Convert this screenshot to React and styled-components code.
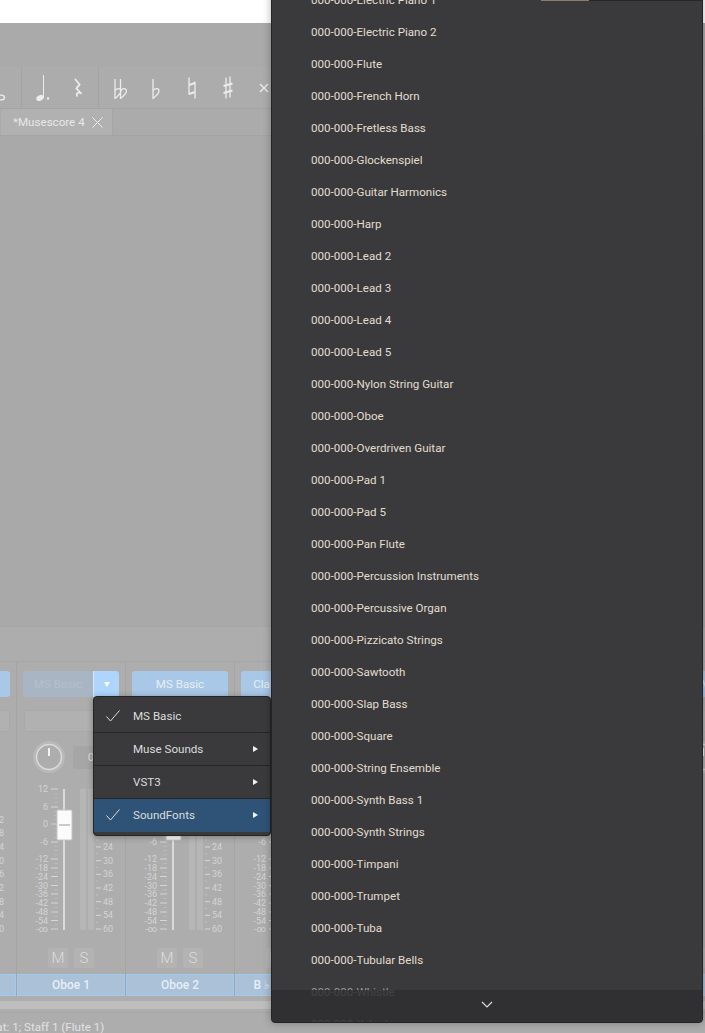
import React from "react";
import styled, { createGlobalStyle } from "styled-components";

const FONT = `Roboto, "Open Sans", sans-serif`;

const GlobalStyle = createGlobalStyle`
  html, body {
    margin: 0;
    background: #ababab;
    overflow: hidden;
  }
`;

const Page = styled.div`
  position: relative;
  width: 705px;
  height: 1033px;
  overflow: hidden;
  display: flex;
  flex-direction: column;
  background: #ababab;
  font-family: ${FONT};
  font-size: 11.6px;
`;

const TopWhite = styled.div`
  height: 23px;
  flex: none;
  background: #fff;
`;

const HeaderBand = styled.div`
  height: 44px;
  flex: none;
  background: #aaaaaa;
`;

const NoteBar = styled.div`
  height: 41px;
  flex: none;
  display: flex;
  background: #acacac;
  border-bottom: 1px solid #a4a4a4;
`;

const NoteCell = styled.div`
  display: flex;
  align-items: center;
  gap: ${p => p.$gap}px;
  padding-left: ${p => p.$pad}px;
  width: ${p => p.$w}px;
  box-sizing: border-box;
  border-right: 1px solid #a4a4a4;
  overflow: hidden;
  flex: none;
  svg {
    flex: none;
    display: block;
  }
`;

const TabBar = styled.div`
  height: 26px;
  flex: none;
  display: flex;
  padding-left: 1px;
  background: #ababab;
  border-bottom: 1px solid #a4a4a4;
`;

const Tab = styled.div`
  width: 112px;
  box-sizing: border-box;
  display: flex;
  align-items: center;
  justify-content: space-between;
  padding: 0 9px 0 12px;
  background: #b1b1b1;
  border-right: 1px solid #a6a6a6;
  color: #e8e8e8;
`;

const ScoreArea = styled.div`
  height: 490px;
  flex: none;
  background: #a9a9a9;
  border-bottom: 1px solid #a5a5a5;
`;

const GapBand = styled.div`
  height: 34px;
  flex: none;
  background: #adadad;
  border-bottom: 1px solid #a6a6a6;
`;

const Mixer = styled.div`
  display: flex;
  flex: none;
  margin-left: -92px;
  background: #adadad;
`;

const Strip = styled.div`
  width: 109px;
  flex: none;
  box-sizing: border-box;
  display: flex;
  flex-direction: column;
  padding-top: 9px;
  border-right: 1px solid #a4a4a4;
`;

const SoundRow = styled.div`
  display: flex;
  width: 96px;
  height: 26px;
  margin-left: 6px;
  color: #e6eef6;
`;

const SoundMain = styled.div`
  flex: 1;
  min-width: 0;
  display: flex;
  align-items: center;
  justify-content: center;
  padding-bottom: 1px;
  box-sizing: border-box;
  white-space: nowrap;
  overflow: hidden;
  border-radius: ${p => (p.$open ? "3px 0 0 3px" : "3px")};
  background: ${p => (p.$open ? "#a8b6c4" : "#a9c7e6")};
  color: ${p => (p.$open ? "#b4bfca" : "#e6eef6")};
`;

const SoundArrow = styled.div`
  width: 26px;
  flex: none;
  display: flex;
  align-items: center;
  justify-content: center;
  background: #aed5fc;
  border-left: 1px solid #d5e8fb;
  box-sizing: border-box;
  border-radius: 0 3px 3px 0;
`;

const TriangleDown = styled.span`
  width: 0;
  height: 0;
  border-left: 3.5px solid transparent;
  border-right: 3.5px solid transparent;
  border-top: 5px solid #fff;
`;

const FieldRow = styled.div`
  width: 95px;
  height: 22px;
  margin: 13px 0 0 7px;
  box-sizing: border-box;
  background: #b1b1b1;
  border: 1px solid #a9a9a9;
  border-radius: 3px;
`;

const KnobRow = styled.div`
  display: flex;
  align-items: center;
  gap: 8px;
  height: 32px;
  margin: 9px 0 0 16px;
`;

const ValueBox = styled.div`
  width: 36px;
  height: 23px;
  display: flex;
  align-items: center;
  justify-content: center;
  background: #a6a6a6;
  border-radius: 2px;
  color: #dcdcdc;
`;

const Scale = styled.svg`
  display: block;
  margin-top: 8px;
  flex: none;
`;

const ScaleText = styled.text`
  font-family: ${FONT};
  font-size: 9px;
  fill: #d4d4d4;
`;

const MuteRow = styled.div`
  display: flex;
  gap: 6px;
  margin: 12px 0 0 31px;
`;

const MuteButton = styled.div`
  width: 20px;
  height: 20px;
  display: flex;
  align-items: center;
  justify-content: center;
  background: #b3b3b3;
  border-radius: 2px;
  color: #dcdcdc;
  font-size: 15px;
  font-weight: 300;
`;

const NameTag = styled.div`
  height: 22px;
  margin: 6px 0 0 0;
  box-sizing: border-box;
  display: flex;
  align-items: center;
  justify-content: center;
  white-space: nowrap;
  overflow: hidden;
  background: #aac1d7;
  border: 1px solid #9fcbf3;
  color: #e6eef6;
  font-size: 12px;
  font-weight: 500;
`;

const ScrollGutter = styled.div`
  height: 17px;
  flex: none;
  box-sizing: border-box;
  padding-top: 5px;
  background: #adadad;
  border-bottom: 1px solid #a6a6a6;
`;

const ScrollThumb = styled.div`
  height: 8px;
  background: #bebebe;
`;

const StatusBar = styled.div`
  flex: 1;
  display: flex;
  align-items: center;
  margin-left: -17px;
  padding-top: 7px;
  background: #adadad;
  color: #e2e2e2;
  white-space: nowrap;
`;

const SoundMenu = styled.div`
  position: absolute;
  left: 93px;
  top: 696px;
  width: 178px;
  box-sizing: border-box;
  padding: 3px 0 3px;
  background: #3a3a3c;
  border: 1px solid #242424;
  border-radius: 4px;
  box-shadow: 0 1px 6px rgba(0, 0, 0, 0.3);
`;

const MenuRow = styled.div`
  height: 33px;
  box-sizing: border-box;
  display: flex;
  align-items: center;
  position: relative;
  padding-left: 39px;
  color: #dcdcdc;
  background: ${p => (p.$active ? "#2f5377" : "transparent")};
  border-bottom: 1px solid ${p => (p.$active ? "#2f5377" : "#262626")};
`;

const CheckMark = styled.svg`
  position: absolute;
  left: 12px;
  top: 10px;
`;

const SubArrow = styled.span`
  position: absolute;
  right: 12px;
  top: 13px;
  width: 0;
  height: 0;
  border-top: 3.5px solid transparent;
  border-bottom: 3.5px solid transparent;
  border-left: 5px solid #f0f0f0;
`;

const InstrumentPopup = styled.div`
  position: absolute;
  left: 271px;
  top: -20px;
  width: 432px;
  height: 1043px;
  box-sizing: border-box;
  padding-top: 3px;
  overflow: hidden;
  background: #3a3a3c;
  border: 1px solid #242424;
  border-radius: 4px;
  box-shadow: 0 0 8px rgba(0, 0, 0, 0.3);
`;

const InstrumentRow = styled.div`
  height: 32px;
  display: flex;
  align-items: center;
  padding-left: 39px;
  color: ${p => (p.$faded ? "#9a9a9a" : "#e2ddd2")};
`;

const ScrollMore = styled.div`
  position: absolute;
  left: 0;
  right: 0;
  bottom: 0;
  height: 32px;
  display: flex;
  justify-content: center;
  padding-top: 11px;
  box-sizing: border-box;
  background: rgba(46, 46, 49, 0.82);
`;

const TopSliver = styled.div`
  position: absolute;
  left: ${p => p.$x}px;
  top: 0;
  width: ${p => p.$w}px;
  height: 1px;
  background: ${p => p.$c};
`;

const FLATBOWL = "c2-2.6 6-2.6 6 .6 0 2.4-3 5-6 7.4";

function HalfNote() {
  return (
    <svg width="15" height="26" viewBox="0 0 15 26" fill="#ececec">
      <rect x="8" y="0" width="1" height="23" />
      <ellipse cx="5" cy="23" rx="3.9" ry="2.8" transform="rotate(-24 5 23)" />
      <circle cx="13" cy="23.5" r="1.2" />
    </svg>
  );
}

function QuarterRest() {
  return (
    <svg width="9" height="20" viewBox="0 0 9 20" fill="none" stroke="#ececec" strokeWidth="1.8">
      <path d="M2 1l4.6 5.4-3.2 4 4.2 4.6c-2.4-.8-4.4-.4-3.6 3.6" />
    </svg>
  );
}

function Accidental({ d, w = 2, sw = 1.3 }) {
  return (
    <svg width="14" height="24" viewBox="0 0 14 24" fill="none" stroke="#ececec" strokeWidth={sw}>
      {d.map((path, i) => <path key={i} d={path} strokeWidth={i > 1 ? w : sw} />)}
    </svg>
  );
}

const ACCIDENTALS = [
  [["M2 3v20", `M2 14.5${FLATBOWL}`, "M7.5 3v20", `M7.5 14.5${FLATBOWL}`], 1.3],
  [["M4 3v20", `M4 14.5${FLATBOWL}`], 2],
  [["M4 1.5v17", "M10 5.5v17", "M4 9l6-2", "M4 18l6-2"], 2],
  [["M5 1.5v21", "M9 .5v21", "M2.5 10l9-2.5", "M2.5 17l9-2.5"], 2],
  [["M3 8l8 8", "M11 8l-8 8"], 2],
];

const LEFT_MARKS = [
  ["12", 8], ["6", 26], ["0", 43], ["-6", 61], ["-12", 78], ["-18", 87], ["-24", 95.5],
  ["-30", 104.5], ["-36", 113], ["-42", 122], ["-48", 131], ["-54", 139.5], ["-∞", 148],
];

const RIGHT_MARKS = ["12", "18", "24", "30", "36", "42", "48", "54", "60"];

function FaderScale() {
  const minor = [];
  for (let i = 0; i < LEFT_MARKS.length - 1; i++) {
    const top = LEFT_MARKS[i][1];
    const bottom = LEFT_MARKS[i + 1][1];
    const count = bottom - top > 10 ? 3 : 1;
    for (let k = 1; k <= count; k++) {
      minor.push(top + ((bottom - top) * k) / (count + 1));
    }
  }
  return (
    <Scale width="108" height="155" viewBox="0 0 108 155">
      {LEFT_MARKS.map(([label, y]) => (
        <g key={label}>
          <ScaleText x="31" y={y + 3} textAnchor="end">{label}</ScaleText>
          <rect x="34" y={y - 0.5} width="7" height="1" fill="#d6d6d6" />
        </g>
      ))}
      {minor.map(y => <rect key={y} x="37" y={y - 0.5} width="4" height="1" fill="#bababa" />)}
      <rect x="46" y="8" width="2" height="141" fill="#dadada" />
      <rect x="63" y="8" width="6" height="141" fill="#b6b6b6" />
      <rect x="71" y="8" width="6" height="141" fill="#b6b6b6" />
      {RIGHT_MARKS.map((label, i) => {
        const y = 148 - (8 - i) * 13.67;
        return (
          <g key={label}>
            <rect x="79" y={y - 0.5} width="5" height="1" fill="#d6d6d6" />
            {i < 8 && <rect x="79" y={y + 6.3} width="2" height="1" fill="#c0c0c0" />}
            <ScaleText x="86" y={y + 3}>{label}</ScaleText>
          </g>
        );
      })}
      <rect x="40" y="29" width="15" height="30" rx="1" fill="#fbfbfb" stroke="#c4c4c4" />
      <rect x="42" y="43.5" width="11" height="1" fill="#9a9a9a" />
    </Scale>
  );
}

function Knob() {
  return (
    <svg width="32" height="32" viewBox="0 0 32 32" fill="none" style={{ flex: "none" }}>
      <circle cx="16" cy="16" r="14.5" stroke="#b9b9b9" strokeWidth="3" />
      <circle cx="16" cy="16" r="12.5" stroke="#dcdcdc" strokeWidth="1.5" />
      <rect x="15" y="7" width="2" height="8" fill="#f2f2f2" />
    </svg>
  );
}

const STRIPS = [
  { name: "Flute 1", sound: "MS Basic" },
  { name: "Oboe 1", sound: "MS Basic", open: true },
  { name: "Oboe 2", sound: "MS Basic" },
  { name: "B ♭ Clarinet 1", sound: "Classic Guitar" },
  { name: "B ♭ Clarinet 2", sound: "MS Basic" },
  { name: "Bassoon 1", sound: "MS Basic" },
  { name: "Bassoon 2", sound: "MS Basic" },
  { name: "Horn 1", sound: "MS Basic" },
];

const SOUND_ITEMS = [
  { label: "MS Basic", checked: true },
  { label: "Muse Sounds", more: true },
  { label: "VST3", more: true },
  { label: "SoundFonts", checked: true, more: true, active: true },
];

const INSTRUMENTS = [
  "Electric Piano 1", "Electric Piano 2", "Flute", "French Horn", "Fretless Bass", "Glockenspiel",
  "Guitar Harmonics", "Harp", "Lead 2", "Lead 3", "Lead 4", "Lead 5", "Nylon String Guitar", "Oboe",
  "Overdriven Guitar", "Pad 1", "Pad 5", "Pan Flute", "Percussion Instruments", "Percussive Organ",
  "Pizzicato Strings", "Sawtooth", "Slap Bass", "Square", "String Ensemble", "Synth Bass 1",
  "Synth Strings", "Timpani", "Trumpet", "Tuba", "Tubular Bells", "Whistle", "Xylophone",
];

export default function App() {
  return (
    <Page>
      <GlobalStyle />
      <TopWhite />
      <HeaderBand />
      <NoteBar>
        <NoteCell $w={22} $pad={0} $gap={0}>
          <svg width="6" height="12" viewBox="0 0 6 12" fill="none" stroke="#ececec" strokeWidth="1.4" style={{ marginTop: 16 }}>
            <ellipse cx="1" cy="7.5" rx="3.5" ry="2.4" />
          </svg>
        </NoteCell>
        <NoteCell $w={77} $pad={13} $gap={23}>
          <HalfNote />
          <QuarterRest />
        </NoteCell>
        <NoteCell $w={200} $pad={14} $gap={22}>
          {ACCIDENTALS.map(([d, w], i) => <Accidental key={i} d={d} w={w} />)}
        </NoteCell>
      </NoteBar>
      <TabBar>
        <Tab>
          *Musescore 4
          <svg width="11" height="11" viewBox="0 0 11 11" stroke="#ececec" strokeWidth="1">
            <path d="M.5.5l10 10M10.5.5l-10 10" />
          </svg>
        </Tab>
      </TabBar>
      <ScoreArea />
      <GapBand />
      <Mixer>
        {STRIPS.map(strip => (
          <Strip key={strip.name}>
            <SoundRow>
              <SoundMain $open={strip.open}>{strip.sound}</SoundMain>
              {strip.open && <SoundArrow><TriangleDown /></SoundArrow>}
            </SoundRow>
            <FieldRow />
            <KnobRow>
              <Knob />
              <ValueBox>0</ValueBox>
            </KnobRow>
            <FaderScale />
            <MuteRow>
              <MuteButton>M</MuteButton>
              <MuteButton>S</MuteButton>
            </MuteRow>
            <NameTag>{strip.name}</NameTag>
          </Strip>
        ))}
      </Mixer>
      <ScrollGutter><ScrollThumb /></ScrollGutter>
      <StatusBar>Beat: 1; Staff 1 (Flute 1)</StatusBar>

      <SoundMenu>
        {SOUND_ITEMS.map(item => (
          <MenuRow key={item.label} $active={item.active}>
            {item.checked && (
              <CheckMark width="14" height="12" viewBox="0 0 14 12" fill="none" stroke="#dcdcdc" strokeWidth="1">
                <path d="M.5 6.5l4 4.5L13.5.5" />
              </CheckMark>
            )}
            {item.label}
            {item.more && <SubArrow />}
          </MenuRow>
        ))}
      </SoundMenu>

      <InstrumentPopup>
        {INSTRUMENTS.map((name, i) => (
          <InstrumentRow key={name} $faded={i > 30}>000-000-{name}</InstrumentRow>
        ))}
        <ScrollMore>
          <svg width="12" height="7" viewBox="0 0 12 7" fill="none" stroke="#dcdcdc" strokeWidth="1.2">
            <path d="M1 1l5 5 5-5" />
          </svg>
        </ScrollMore>
      </InstrumentPopup>
      <TopSliver $x={541} $w={48} $c="#8a7c66" />
      <TopSliver $x={589} $w={114} $c="#26262a" />
    </Page>
  );
}
